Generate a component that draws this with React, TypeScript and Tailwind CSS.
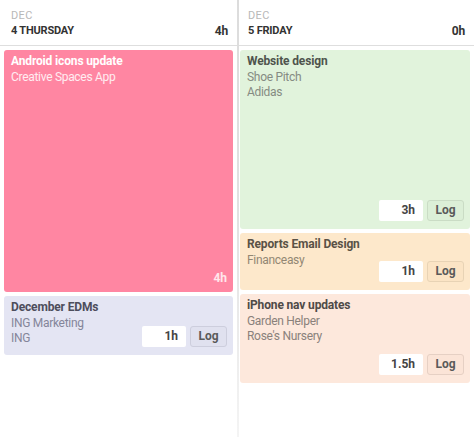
import React from "react";

type Entry = {
  title: string;
  lines: string[];
  hours: string;
  h: number;
  bg: string;
  title_c: string;
  sub_c: string;
  btn: string;
  pink?: boolean;
};

function LogControls({ hours, btn }: { hours: string; btn: string }) {
  return (
    <div className="absolute right-[6px] bottom-[8px] flex gap-[4px]">
      <div className="w-[44px] h-[21px] bg-white rounded-[2px] flex items-center justify-end pr-[8px] text-[12px] font-bold text-[#444]">
        {hours}
      </div>
      <div
        className={
          "w-[37px] h-[21px] rounded-[3px] border flex items-center justify-center text-[12px] font-bold text-[#5a5a5a] " +
          btn
        }
      >
        Log
      </div>
    </div>
  );
}

function Card({ e }: { e: Entry }) {
  return (
    <div
      className={"relative rounded-[3px] px-[7px] pt-[4px] leading-[15.5px] text-[12px] " + e.bg}
      style={{ height: e.h }}
    >
      <div className={"font-bold tracking-[-0.15px] " + e.title_c}>{e.title}</div>
      {e.lines.map((l) => (
        <div key={l} className={"tracking-[-0.3px] " + e.sub_c}>
          {l}
        </div>
      ))}
      {e.pink ? (
        <div className="absolute right-[6px] bottom-[6px] text-[12px] font-bold text-white/80">{e.hours}</div>
      ) : (
        <LogControls hours={e.hours} btn={e.btn} />
      )}
    </div>
  );
}

function Header({ day, total, pl }: { day: string; total: string; pl: string }) {
  return (
    <div className={"h-[46px] border-b border-[#dedede] pr-[9px] pt-[9px] flex flex-col " + pl}>
      <div className="text-[11px] leading-[13px] text-[#b8b8b8] tracking-[0.4px]">DEC</div>
      <div className="flex justify-between text-[11px] leading-[14px] font-bold text-[#333] mt-[2px] tracking-[-0.2px]">
        <span>{day}</span>
        <span className="text-[12px]">{total}</span>
      </div>
    </div>
  );
}

const left: Entry[] = [
  {
    title: "Android icons update",
    lines: ["Creative Spaces App"],
    hours: "4h",
    h: 242,
    bg: "bg-[#ff86a2]",
    title_c: "text-white",
    sub_c: "text-white/85",
    btn: "",
    pink: true,
  },
  {
    title: "December EDMs",
    lines: ["ING Marketing", "ING"],
    hours: "1h",
    h: 59,
    bg: "bg-[#e4e5f3]",
    title_c: "text-[#4d4d5c]",
    sub_c: "text-[#84859a]",
    btn: "border-[#cdcedd] bg-[#e0e1ef]",
  },
];

const right: Entry[] = [
  {
    title: "Website design",
    lines: ["Shoe Pitch", "Adidas"],
    hours: "3h",
    h: 179,
    bg: "bg-[#e1f3dc]",
    title_c: "text-[#4f544d]",
    sub_c: "text-[#858b82]",
    btn: "border-[#cadcc5] bg-[#dcefd7]",
  },
  {
    title: "Reports Email Design",
    lines: ["Financeasy"],
    hours: "1h",
    h: 57,
    bg: "bg-[#fde8cb]",
    title_c: "text-[#5a5246]",
    sub_c: "text-[#928773]",
    btn: "border-[#e8d3b5] bg-[#fbe4c5]",
  },
  {
    title: "iPhone nav updates",
    lines: ["Garden Helper", "Rose's Nursery"],
    hours: "1.5h",
    h: 89,
    bg: "bg-[#fde8dc]",
    title_c: "text-[#4f4a47]",
    sub_c: "text-[#8a817b]",
    btn: "border-[#e6d0c4] bg-[#fbe4d7]",
  },
];

export default function App() {
  return (
    <div className="w-[474px] h-[437px] bg-white flex overflow-hidden font-['Roboto',sans-serif]">
      <div className="w-[237px] flex flex-col">
        <Header day="4 THURSDAY" total="4h" pl="pl-[11px]" />
        <div className="flex flex-col gap-[4px] pt-[4px] pl-[4px] pr-[4px]">
          {left.map((e) => (
            <Card key={e.title} e={e} />
          ))}
        </div>
      </div>
      <div className="w-[2px] h-full bg-gradient-to-b from-[#dcdcdc] via-[#e2e2e2] to-[#f4f4f4]" />
      <div className="flex-1 flex flex-col">
        <Header day="5 FRIDAY" total="0h" pl="pl-[9px]" />
        <div className="flex flex-col gap-[4px] pt-[4px] pl-[1px] pr-[4px]">
          {right.map((e) => (
            <Card key={e.title} e={e} />
          ))}
        </div>
      </div>
    </div>
  );
}
